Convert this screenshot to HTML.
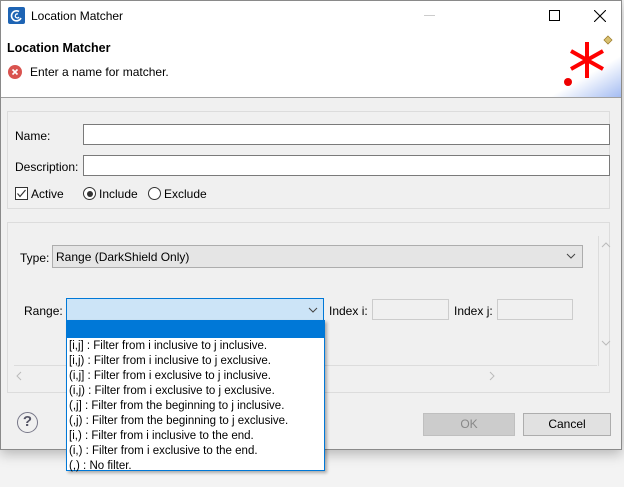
<!DOCTYPE html>
<html><head><meta charset="utf-8"><style>
*{box-sizing:border-box;margin:0;padding:0}
body{width:624px;height:487px;background:#f3f3f3;font-family:"Liberation Sans",sans-serif;font-size:12px;color:#000;position:relative;overflow:hidden}
.a{position:absolute}
.win{left:0;top:0;width:622px;height:450px;border:1px solid #8a8a8a;background:#f0f0f0;box-shadow:0 4px 12px rgba(0,0,0,.25)}
.inp{background:#fff;border:1px solid #7a7a7a}
.grp{border:1px solid #dcdcdc}
.it{position:absolute;left:2px;white-space:nowrap;font-size:11.5px}
</style></head><body>
<div class="a win"></div>
<div class="a" style="left:1px;top:1px;width:620px;height:96px;background:#fff"></div>
<div class="a" style="left:1px;top:97px;width:620px;height:1px;background:#a0a0a0"></div>
<div class="a" style="left:550px;top:55px;width:71px;height:42px;background:linear-gradient(150deg,#fff 50%,#a4bcf2)"></div>
<div class="a" style="left:8px;top:7px;width:17px;height:17px;background:#1e64b4;border-radius:2px"></div>
<svg class="a" style="left:8px;top:7px" width="17" height="17"><path d="M11 4.5A5 5 0 1 0 13 11" stroke="#fff" stroke-width="1.6" fill="none"/><path d="M10 7a2 2 0 1 0 1 3" stroke="#fff" stroke-width="1.2" fill="none"/></svg>
<div class="a" style="left:31px;top:9px;font-size:12px">Location Matcher</div>
<div class="a" style="left:424px;top:15px;width:11px;height:1px;background:#ccc"></div>
<div class="a" style="left:549px;top:10px;width:11px;height:11px;border:1px solid #000"></div>
<svg class="a" style="left:594px;top:10px" width="12" height="12"><path d="M0 0L12 12M12 0L0 12" stroke="#000" stroke-width="1.1"/></svg>
<div class="a" style="left:7px;top:41px;font-weight:bold;font-size:12.5px">Location Matcher</div>
<div class="a" style="left:8px;top:65px;width:14px;height:14px;border-radius:50%;background:#d9534f"></div>
<svg class="a" style="left:8px;top:65px" width="14" height="14"><path d="M4.5 4.5L9.5 9.5M9.5 4.5L4.5 9.5" stroke="#fff" stroke-width="1.6"/></svg>
<div class="a" style="left:30px;top:65px">Enter a name for matcher.</div>
<svg class="a" style="left:558px;top:34px" width="60" height="56"><g stroke="#f00" stroke-width="4"><path d="M29 8V44M13 17L45 35M45 17L13 35"/></g><circle cx="10" cy="48" r="4" fill="#e00"/><path d="M50 2l4 4-4 4-4-4z" fill="#d8c070" stroke="#a08030" stroke-width=".8"/></svg>
<div class="a grp" style="left:7px;top:111px;width:603px;height:98px"></div>
<div class="a" style="left:15px;top:129px">Name:</div>
<div class="a inp" style="left:83px;top:124px;width:527px;height:21px"></div>
<div class="a" style="left:15px;top:160px">Description:</div>
<div class="a inp" style="left:83px;top:155px;width:527px;height:21px"></div>
<div class="a" style="left:15px;top:187px;width:13px;height:13px;border:1px solid #333;background:#fff"></div>
<svg class="a" style="left:15px;top:187px" width="13" height="13"><path d="M2.5 6.5L5 9.5L10.5 3" stroke="#333" stroke-width="1.2" fill="none"/></svg>
<div class="a" style="left:31px;top:187px">Active</div>
<div class="a" style="left:83px;top:187px;width:13px;height:13px;border:1px solid #333;border-radius:50%;background:#fff"></div>
<div class="a" style="left:86.5px;top:190.5px;width:6px;height:6px;border-radius:50%;background:#333"></div>
<div class="a" style="left:99px;top:187px">Include</div>
<div class="a" style="left:148px;top:187px;width:13px;height:13px;border:1px solid #333;border-radius:50%;background:#fff"></div>
<div class="a" style="left:164px;top:187px">Exclude</div>
<div class="a grp" style="left:7px;top:222px;width:603px;height:171px"></div>
<div class="a" style="left:14px;top:365px;width:583px;height:1px;background:#dcdcdc"></div>
<div class="a" style="left:598px;top:236px;width:1px;height:130px;background:#dcdcdc"></div>
<svg class="a" style="left:600px;top:241px" width="12" height="130"><path d="M2 6L6 2L10 6" stroke="#bbb" fill="none"/><path d="M2 100L6 104L10 100" stroke="#bbb" fill="none"/></svg>
<svg class="a" style="left:16px;top:371px" width="480" height="10"><path d="M5 1L1 5L5 9" stroke="#bbb" fill="none"/><path d="M474 1L478 5L474 9" stroke="#bbb" fill="none"/></svg>
<div class="a" style="left:20px;top:251px">Type:</div>
<div class="a" style="left:52px;top:245px;width:531px;height:23px;background:#e5e5e5;border:1px solid #adadad;padding:4px 3px">Range (DarkShield Only)</div>
<svg class="a" style="left:566px;top:253px" width="10" height="6"><path d="M1 1L5 5L9 1" stroke="#444" fill="none"/></svg>
<div class="a" style="left:24px;top:304px">Range:</div>
<div class="a" style="left:66px;top:298px;width:258px;height:23px;background:#cce4f7;border:1px solid #0078d7"></div>
<svg class="a" style="left:308px;top:307px" width="10" height="6"><path d="M1 1L5 5L9 1" stroke="#444" fill="none"/></svg>
<div class="a" style="left:329px;top:304px">Index i:</div>
<div class="a" style="left:372px;top:299px;width:77px;height:21px;border:1px solid #ccc;background:#f0f0f0"></div>
<div class="a" style="left:454px;top:304px">Index j:</div>
<div class="a" style="left:497px;top:299px;width:76px;height:21px;border:1px solid #ccc;background:#f0f0f0"></div>
<div class="a" style="left:17px;top:412px;width:21px;height:21px;border:1.5px solid #778;border-radius:50%;text-align:center;font-size:15px;line-height:18px;color:#556;font-weight:bold">?</div>
<div class="a" style="left:423px;top:413px;width:92px;height:23px;background:#ccc;border:1px solid #bfbfbf;color:#888;text-align:center;line-height:21px">OK</div>
<div class="a" style="left:523px;top:413px;width:88px;height:23px;background:#e1e1e1;border:1px solid #adadad;text-align:center;line-height:21px">Cancel</div>
<div class="a" style="left:66px;top:320px;width:259px;height:151px;background:#fff;border:1px solid #0078d7;box-shadow:2px 2px 3px rgba(0,0,0,.3)">
<div class="a" style="left:0;top:0;width:257px;height:17px;background:#0078d7"></div>
<div class="it" style="top:19px">[i,j] : Filter from i inclusive to j inclusive.</div>
<div class="it" style="top:34px">[i,j) : Filter from i inclusive to j exclusive.</div>
<div class="it" style="top:49px">(i,j] : Filter from i exclusive to j inclusive.</div>
<div class="it" style="top:64px">(i,j) : Filter from i exclusive to j exclusive.</div>
<div class="it" style="top:79px">(,j] : Filter from the beginning to j inclusive.</div>
<div class="it" style="top:94px">(,j) : Filter from the beginning to j exclusive.</div>
<div class="it" style="top:109px">[i,) : Filter from i inclusive to the end.</div>
<div class="it" style="top:124px">(i,) : Filter from i exclusive to the end.</div>
<div class="it" style="top:139px">(,) : No filter.</div>
</div>
</body></html>
